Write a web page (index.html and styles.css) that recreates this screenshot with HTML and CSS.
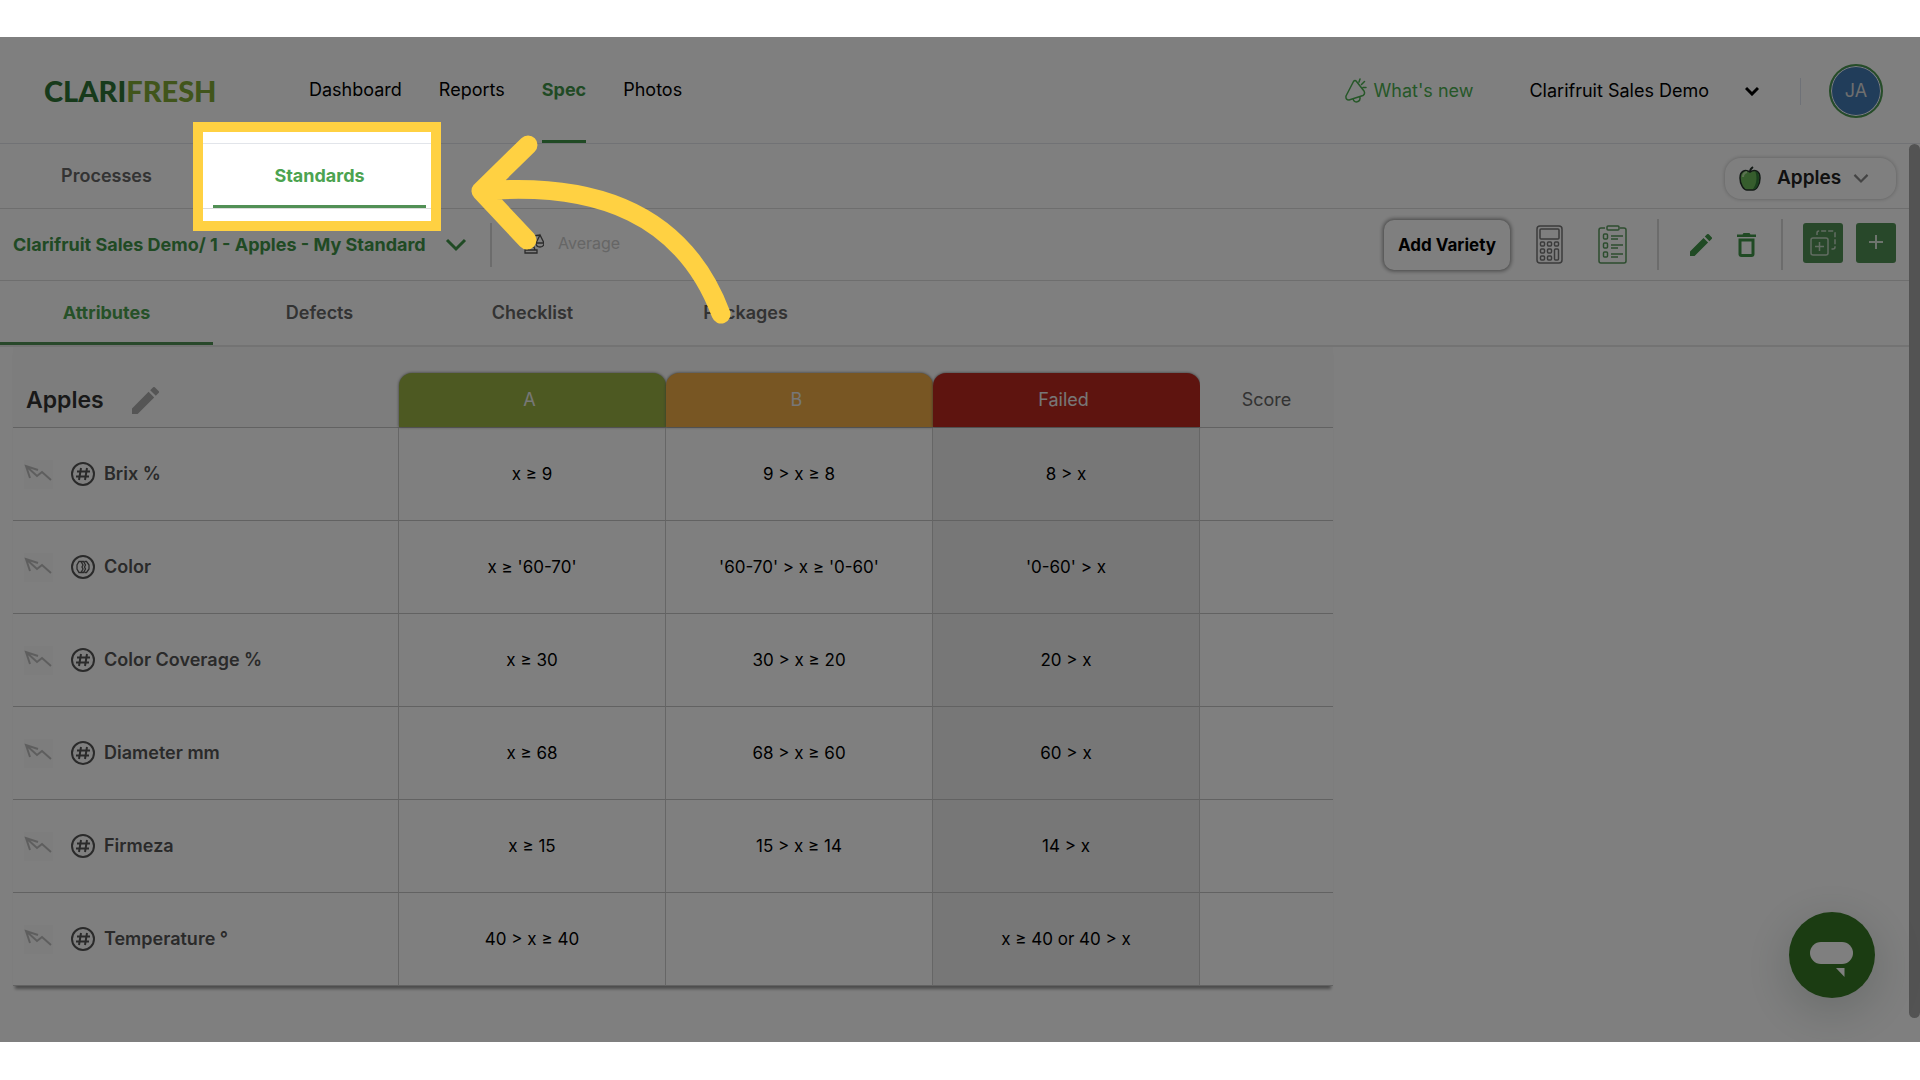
FILE: index.html
```html
<!DOCTYPE html>
<html lang="en">
<head>
<meta charset="utf-8">
<meta name="viewport" content="width=device-width, initial-scale=1">
<title>Clarifresh - Standards</title>
<link rel="stylesheet" href="styles.css">
</head>
<body>
<svg class="sprite" aria-hidden="true">
  <symbol id="pencil" viewBox="3 3 18 18"><path d="M3 17.25V21h3.75L17.8 9.94l-3.75-3.75L3 17.25zM20.7 7.04a1 1 0 0 0 0-1.41l-2.34-2.34a1 1 0 0 0-1.41 0l-1.83 1.83 3.75 3.75 1.83-1.83z" fill="currentColor"/></symbol>
  <symbol id="chevron" viewBox="0 0 22 14"><path d="M2 2l9 9 9-9" fill="none" stroke="currentColor" stroke-width="3"/></symbol>
  <symbol id="trend" viewBox="0 0 29 29"><rect width="29" height="29" fill="#fafafa"/><path d="M6 18L2 6l12 4M2 6l11 10 5-4 9 8" fill="none" stroke="#bdbdbd" stroke-width="2"/></symbol>
  <symbol id="hash" viewBox="0 0 24 24"><g fill="none" stroke="#555" stroke-width="2"><circle cx="12" cy="12" r="11"/><path d="M10 6L8 18M16 6l-2 12M6 9.500h13M5 14.500h13"/></g></symbol>
  <symbol id="scale-type" viewBox="0 0 24 24"><g fill="none" stroke="#555"><circle cx="12" cy="12" r="11" stroke-width="2"/><path stroke-width="1.300" d="M8 6.500h2l2 3.500-1 2 1 2-2 3.500H8L6 14v-4zM10.500 6.500h2l2 3.500-1 2 1 2-2 3.500h-2M13.500 6.500h2L18 10v4l-2.500 3.500h-2"/></g></symbol>
</svg>
<div class="app">
  <header class="topbar">
    <a class="logo" href="#"><span>CLARI</span><span class="lime">FRESH</span></a>
    <nav class="nav">
      <a href="#">Dashboard</a>
      <a href="#">Reports</a>
      <a href="#" class="current">Spec</a>
      <a href="#">Photos</a>
    </nav>
    <a class="news" href="#">
      <svg width="22" height="26" viewBox="0 0 22 26" fill="none" stroke="currentColor" stroke-width="1.500" stroke-linecap="round" stroke-linejoin="round"><path d="M8.500 3.500q1.500-2 3 0L19 13q1.500 3-1 4.500L4 22q-3.500 0-3-4zM8 21q1.500 4 5 2.500 2.500-1 2-4.500M14 4l1-3M16.500 6.500l3-3M18 9.500h3"/></svg>
      <span>What's new</span>
    </a>
    <button class="account" type="button"><span>Clarifruit Sales Demo</span>
      <svg width="14" height="10" viewBox="0 0 14 10"><path d="M1 2l6 6 6-6" fill="none" stroke="currentColor" stroke-width="3"/></svg>
    </button>
    <span class="thin-rule"></span>
    <button class="avatar" type="button">JA</button>
  </header>
  <div class="body">
    <main class="main">
      <div class="row">
        <nav class="tabs">
          <a href="#">Processes</a>
          <a href="#" class="active">Standards</a>
        </nav>
        <button class="fruit" type="button">
          <svg width="22" height="25" viewBox="0 0 22 25"><path d="M11 6C6 3 1 5 1 12c0 7 4 12 7 12h6c3 0 7-5 7-12 0-7-5-9-10-6z" fill="#6dbb5b" stroke="#24332a" stroke-width="1.500"/><path d="M16 5c3 7 1 14-2 18 4 1 6-5 6-11 0-4-1-6-4-7z" fill="#35803b"/><path d="M11 6q0-3 3-5" fill="none" stroke="#24332a" stroke-width="2"/><path d="M4 11q0-4 4-5" fill="none" stroke="#b8e6a5" stroke-width="2"/></svg>
          <span>Apples</span>
          <svg class="grey" width="16" height="11"><use href="#chevron"/></svg>
        </button>
      </div>
      <div class="row tools">
        <button class="standard" type="button"><span>Clarifruit Sales Demo/ 1 - Apples - My Standard</span><svg width="22" height="14"><use href="#chevron"/></svg></button>
        <span class="rule short"></span>
        <span class="average">
          <svg width="20" height="22" viewBox="0 0 20 22" fill="none" stroke="#555" stroke-width="1.300"><path d="M7 2v10M2 5l14-2M3 6L1 12h5zM16 3l-4 8q0 4 4 4t4-4zM12 11h8M5 15h5l1 3H4zM1 18h12v3H1z"/></svg>
          <span>Average</span>
        </span>
        <div class="actions">
          <button class="variety" type="button">Add Variety</button>
          <div class="views">
            <button type="button" aria-label="Calculator">
              <svg width="27" height="39" viewBox="0 0 27 39" fill="none" stroke="#777" stroke-width="1.500"><rect x="1" y="1" width="25" height="37" rx="3"/><rect x="4" y="4" width="19" height="10" rx="1"/><rect x="4.500" y="17" width="4" height="4" rx="1"/><rect x="11.500" y="17" width="4" height="4" rx="1"/><rect x="18.500" y="17" width="4" height="4" rx="1"/><rect x="4.500" y="24" width="4" height="4" rx="1"/><rect x="11.500" y="24" width="4" height="4" rx="1"/><rect x="4.500" y="31" width="4" height="4" rx="1"/><rect x="11.500" y="31" width="4" height="4" rx="1"/><rect x="18.500" y="24" width="4" height="11" rx="1"/></svg>
            </button>
            <button type="button" aria-label="Checklist">
              <svg width="29" height="39" viewBox="0 0 29 39" fill="none" stroke="#5a9a5e" stroke-width="1.500"><path d="M7 3H3q-2 0-2 2v31q0 2 2 2h23q2 0 2-2V5q0-2-2-2h-4"/><rect x="9" y="1" width="12" height="4" rx="1"/><rect x="5.500" y="9" width="4" height="5" rx="1"/><rect x="5.500" y="18" width="4" height="5" rx="1"/><rect x="5.500" y="27" width="4" height="5" rx="1"/><path d="M13 11h12M13 14h7M13 20h12M13 23h7M13 29h12M13 32h7"/></svg>
            </button>
          </div>
          <span class="rule"></span>
          <div class="edits">
            <button type="button" aria-label="Edit"><svg width="22" height="22"><use href="#pencil"/></svg></button>
            <button type="button" aria-label="Delete">
              <svg width="19" height="24" viewBox="0 0 19 24"><path d="M0 1.500h5.500l1-1.500h6l1 1.500H19V4H0z" fill="currentColor"/><path d="M3 7h13v14q0 1.500-1.500 1.500h-10Q3 22.500 3 21z" fill="none" stroke="currentColor" stroke-width="3"/></svg>
            </button>
          </div>
          <span class="rule"></span>
          <div class="creates">
            <button class="square" type="button" aria-label="Duplicate">
              <svg width="26" height="26" viewBox="0 0 26 26" fill="none" stroke="#c4d8c4" stroke-width="1.500"><rect x="1" y="8" width="17" height="17" rx="2"/><path d="M9.500 12v9M5 16.500h9"/><path d="M7 5V3q0-2 2-2h14q2 0 2 2v14q0 2-2 2h-2" stroke-dasharray="5 2"/></svg>
            </button>
            <button class="square" type="button" aria-label="Add">
              <svg width="14" height="18" viewBox="0 0 14 18"><path d="M7 1v14M0 8h14" stroke="#dde8dd" stroke-width="2"/></svg>
            </button>
          </div>
        </div>
      </div>
      <nav class="row tabs sub">
        <a href="#" class="active">Attributes</a>
        <a href="#">Defects</a>
        <a href="#">Checklist</a>
        <a href="#">Packages</a>
      </nav>
      <section class="sheet">
        <table class="spec">
          <colgroup><col class="c-name"><col class="c-grade"><col class="c-grade"><col class="c-grade"><col class="c-score"></colgroup>
          <thead>
            <tr>
              <th><div class="cell-title">Apples <svg width="27" height="27"><use href="#pencil"/></svg></div></th>
              <th><div class="grade a">A</div></th>
              <th><div class="grade b">B</div></th>
              <th><div class="grade fail">Failed</div></th>
              <th><div class="grade none">Score</div></th>
            </tr>
          </thead>
          <tbody>
            <tr><th><div class="attr"><svg width="29" height="29"><use href="#trend"/></svg><svg width="24" height="24"><use href="#hash"/></svg>Brix %</div></th><td>x ≥ 9</td><td>9 &gt; x ≥ 8</td><td>8 &gt; x</td><td></td></tr>
            <tr><th><div class="attr"><svg width="29" height="29"><use href="#trend"/></svg><svg width="24" height="24"><use href="#scale-type"/></svg>Color</div></th><td>x ≥ '60-70'</td><td>'60-70' &gt; x ≥ '0-60'</td><td>'0-60' &gt; x</td><td></td></tr>
            <tr><th><div class="attr"><svg width="29" height="29"><use href="#trend"/></svg><svg width="24" height="24"><use href="#hash"/></svg>Color Coverage %</div></th><td>x ≥ 30</td><td>30 &gt; x ≥ 20</td><td>20 &gt; x</td><td></td></tr>
            <tr><th><div class="attr"><svg width="29" height="29"><use href="#trend"/></svg><svg width="24" height="24"><use href="#hash"/></svg>Diameter mm</div></th><td>x ≥ 68</td><td>68 &gt; x ≥ 60</td><td>60 &gt; x</td><td></td></tr>
            <tr><th><div class="attr"><svg width="29" height="29"><use href="#trend"/></svg><svg width="24" height="24"><use href="#hash"/></svg>Firmeza</div></th><td>x ≥ 15</td><td>15 &gt; x ≥ 14</td><td>14 &gt; x</td><td></td></tr>
            <tr><th><div class="attr"><svg width="29" height="29"><use href="#trend"/></svg><svg width="24" height="24"><use href="#hash"/></svg>Temperature °</div></th><td>40 &gt; x ≥ 40</td><td></td><td>x ≥ 40 or 40 &gt; x</td><td></td></tr>
          </tbody>
        </table>
      </section>
    </main>
    <div class="track"><div class="thumb"></div></div>
  </div>
  <button class="chat" type="button" aria-label="Open chat">
    <svg width="44" height="36" viewBox="0 0 44 36"><rect width="43" height="22" rx="11" fill="#fff"/><path d="M26 26h8.500v9z" fill="#fff"/></svg>
  </button>
  <div class="spotlight"></div>
  <svg class="arrow" width="270" height="200" viewBox="0 0 270 200" fill="none" stroke="#ffd142" stroke-width="19" stroke-linecap="round" stroke-linejoin="round"><path d="M58 15L11 61l46 49M11 61C130 51 214 86 251 184"/></svg>
</div>
</body>
</html>
```
FILE: styles.css
```css
* { box-sizing: border-box; }
body {
  margin: 0;
  min-height: 100vh;
  padding: 37px 0 38px;
  display: flex;
  flex-direction: column;
  background: #fff;
  color: #000;
  font-family: Inter, Roboto, sans-serif;
  font-size: 18px;
  line-height: 24px;
}
a { color: inherit; text-decoration: none; }
button {
  margin: 0;
  padding: 0;
  border: 0;
  background: none;
  color: inherit;
  font: inherit;
  cursor: pointer;
}
svg { display: block; flex: none; }
.sprite { position: absolute; width: 0; height: 0; }
.app {
  position: relative;
  flex: 1;
  display: flex;
  flex-direction: column;
  overflow: hidden;
}

/* Top bar */
.topbar {
  display: flex;
  align-items: center;
  height: 107px;
  padding: 2px 37px 0 44px;
  border-bottom: 1px solid #e2e5ea;
}
.logo {
  width: 265px;
  color: #2f7536;
  font: 900 29px/36px Lato, sans-serif;
}
.lime { color: #82ab36; }
.nav { display: flex; align-self: stretch; gap: 37px; }
.nav a {
  display: flex;
  align-items: center;
  border-bottom: 3px solid transparent;
}
.nav .current { color: #419548; border-color: #419548; font-weight: 700; }
.news {
  display: flex;
  align-items: center;
  gap: 7px;
  margin-left: auto;
  color: #4caf50;
}
.account { display: flex; align-items: center; gap: 36px; margin-left: 56px; }
.thin-rule { width: 1px; height: 27px; margin: 0 28px 0 41px; background: #dde3ee; }
.avatar {
  width: 54px;
  height: 54px;
  border: 2px solid #4c9a50;
  border-radius: 50%;
  background: #427bb4;
  box-shadow: inset 0 0 0 1px #fff;
  color: #ddd;
}

/* Content rows */
.body { flex: 1; display: flex; }
.main { flex: 1; min-width: 0; }
.row {
  display: flex;
  align-items: center;
  height: 65px;
  border-bottom: 1px solid #dcdcdc;
}
.tabs { display: flex; align-self: stretch; color: #666; font-weight: 600; }
.tabs a {
  display: flex;
  align-items: center;
  justify-content: center;
  align-self: stretch;
  width: 213px;
  padding-top: 3px;
  border-bottom: 3px solid transparent;
}
.tabs .active { color: #4ca350; border-color: #519055; font-weight: 700; }
.sub { height: 66px; border-bottom: 2px solid #e6e6e6; }
.fruit {
  display: flex;
  align-items: center;
  width: 171px;
  height: 41px;
  margin: 4px 13px 0 auto;
  padding: 0 14px;
  border-radius: 16px;
  box-shadow: 0 0 4px #bbb;
  color: #222;
  font-size: 19px;
  font-weight: 600;
}
.fruit span { margin: 0 12px 0 16px; }
.grey { color: #888; }
.tools { height: 72px; padding: 0 13px; }
.standard {
  display: flex;
  align-items: center;
  justify-content: space-between;
  gap: 11px;
  min-width: 454px;
  color: #419548;
  font-weight: 700;
}
.rule { width: 2px; height: 51px; background: #d8d8d8; }
.short { height: 44px; margin: 0 32px 0 23px; }
.average { display: flex; align-items: center; gap: 14px; padding-bottom: 4px; color: #ccc; font-size: 16px; }
.actions { display: flex; align-items: center; gap: 20px; margin-left: auto; color: #419548; }
.variety {
  width: 126px;
  height: 50px;
  border-radius: 10px;
  box-shadow: 0 0 4px 1px #888;
  color: #000;
  font-size: 17px;
  font-weight: 700;
}
.views, .edits, .creates { display: flex; align-items: center; }
.views { gap: 35px; margin: 0 10px 0 6px; }
.edits { gap: 25px; margin: 0 5px 0 11px; }
.creates { gap: 13px; padding-bottom: 4px; }
.square {
  display: flex;
  align-items: center;
  justify-content: center;
  width: 40px;
  height: 40px;
  border-radius: 3px;
  background: #519055;
}

/* Spec table */
.sheet { padding: 0 0 56px 13px; }
.spec {
  width: 100%;
  max-width: 1320px;
  table-layout: fixed;
  border-spacing: 0;
  box-shadow: 0 5px 3px -2px #999;
}
.c-name { width: 386px; }
.c-grade { width: 267px; }
.c-score { width: 133px; }
.spec th, .spec td { padding: 0; border-bottom: 1px solid #c4c4c4; }
.spec thead th {
  height: 81px;
  background: #fafafa;
  vertical-align: bottom;
  font-weight: 400;
}
.cell-title {
  display: flex;
  align-items: center;
  gap: 28px;
  height: 54px;
  padding-left: 13px;
  color: #333;
  font-size: 23px;
  font-weight: 600;
}
.cell-title svg { color: #ababab; }
.grade {
  height: 54px;
  padding-right: 6px;
  border-radius: 13px 13px 0 0;
  box-shadow: 0 0 3px #666;
  color: #eee;
  line-height: 54px;
  text-align: center;
}
.a { background: #9ab345; }
.b { background: #f0ad46; }
.fail { background: #bd291f; }
.none { box-shadow: none; padding-right: 0; color: #666; }
.spec tbody th, .spec tbody td { height: 93px; border-right: 1px solid #ccc; }
.spec tbody td { text-align: center; font-size: 17px; }
.spec tbody td:nth-child(4) { background: #eee; }
.spec tbody td:last-child { border-right: 0; }
.attr {
  display: flex;
  align-items: center;
  padding-left: 11px;
  color: #555;
  font-weight: 600;
}
.attr svg + svg { margin: 0 9px 0 18px; }

.track { width: 11px; padding-bottom: 24px; display: flex; }
.thumb { flex: 1; border-radius: 6px; background: #a6a6a6; }

/* Floating layers */
.chat {
  position: absolute;
  right: 45px;
  bottom: 44px;
  display: grid;
  place-items: center;
  width: 86px;
  height: 86px;
  padding-top: 10px;
  border-radius: 50%;
  background: #367824;
  box-shadow: 0 12px 50px rgba(30, 60, 45, .22);
}
.spotlight {
  position: absolute;
  top: 85px;
  left: 193px;
  width: 248px;
  height: 109px;
  border: 10px solid #ffd142;
  box-shadow: 0 0 0 9999px rgba(0, 0, 0, .5);
  pointer-events: none;
}
.arrow { position: absolute; top: 93px; left: 470px; pointer-events: none; }
```
